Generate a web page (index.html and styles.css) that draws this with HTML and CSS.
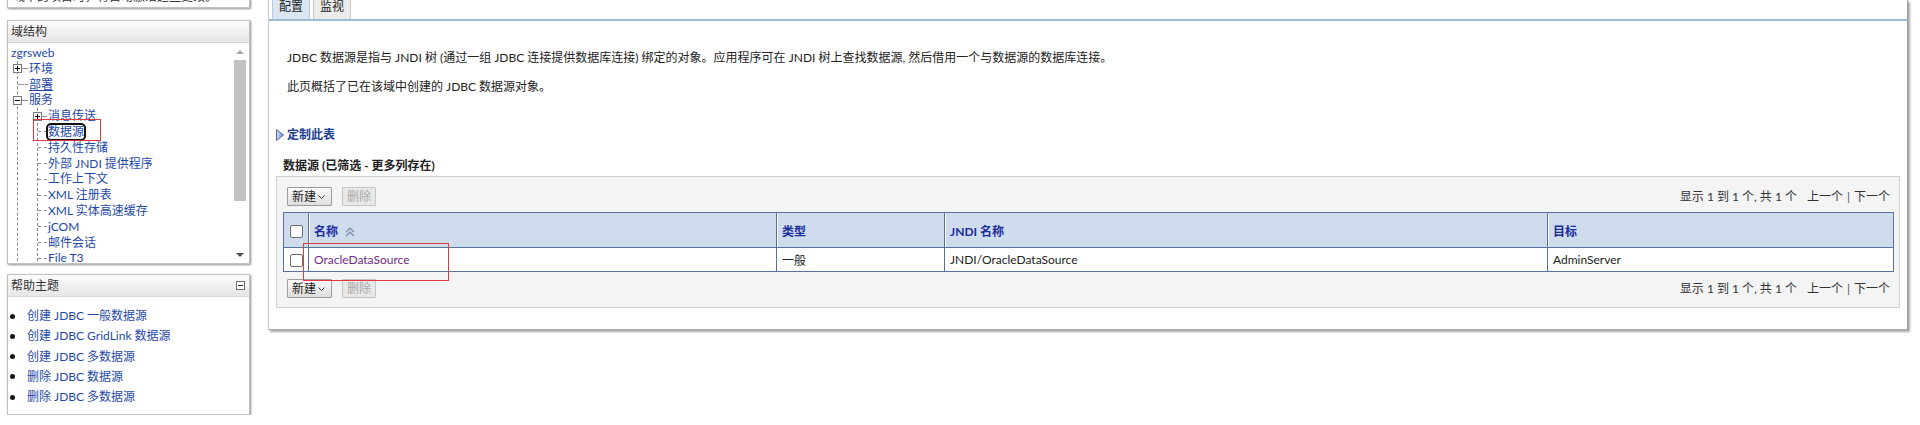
FILE: index.html
```html
<!DOCTYPE html>
<html lang="zh-CN">
<head>
<meta charset="utf-8">
<title>数据源概要</title>
<link rel="stylesheet" href="styles.css">
</head>
<body>
<div class="page">
  <aside class="side">
    <div class="panel change">
      <p class="change-text">域中的项目时，将自动激活这些更改。</p>
    </div>

    <div class="panel domain">
      <div class="phead">域结构</div>
      <div class="tree-wrap">
        <div class="tree">
          <div class="row root"><a class="lbl">zgrsweb</a></div>
          <ul class="l1">
            <li><div class="row"><svg class="tg" width="9" height="9" viewBox="0 0 9 9"><rect x="0.5" y="0.5" width="8" height="8" fill="#fff" stroke="#7a7a7a"/><path d="M2 4.5h5M4.5 2v5" stroke="#000" stroke-width="1"/></svg><span class="ln s1"></span><a class="lbl">环境</a></div></li>
            <li><div class="row"><span class="ln n1"></span><a class="lbl u">部署</a></div></li>
            <li><div class="row"><svg class="tg" width="9" height="9" viewBox="0 0 9 9"><rect x="0.5" y="0.5" width="8" height="8" fill="#fff" stroke="#7a7a7a"/><path d="M2 4.5h5" stroke="#000" stroke-width="1"/></svg><span class="ln s1"></span><a class="lbl">服务</a></div>
              <ul class="l2">
                <li><div class="row"><svg class="tg" width="9" height="9" viewBox="0 0 9 9"><rect x="0.5" y="0.5" width="8" height="8" fill="#fff" stroke="#7a7a7a"/><path d="M2 4.5h5M4.5 2v5" stroke="#000" stroke-width="1"/></svg><span class="ln s2"></span><a class="lbl">消息传送</a></div></li>
                <li><div class="row"><span class="ln n2"></span><a class="lbl focus">数据源</a></div></li>
                <li><div class="row"><span class="ln n2"></span><a class="lbl">持久性存储</a></div></li>
                <li><div class="row"><span class="ln n2"></span><a class="lbl">外部 JNDI 提供程序</a></div></li>
                <li><div class="row"><span class="ln n2"></span><a class="lbl">工作上下文</a></div></li>
                <li><div class="row"><span class="ln n2"></span><a class="lbl">XML 注册表</a></div></li>
                <li><div class="row"><span class="ln n2"></span><a class="lbl">XML 实体高速缓存</a></div></li>
                <li><div class="row"><span class="ln n2"></span><a class="lbl">jCOM</a></div></li>
                <li><div class="row"><span class="ln n2"></span><a class="lbl">邮件会话</a></div></li>
                <li><div class="row"><span class="ln n2"></span><a class="lbl">File T3</a></div></li>
              </ul>
            </li>
          </ul>
        </div>
        <div class="sbar">
          <span class="sb-btn"><span class="tri-up"></span></span>
          <span class="sb-thumb"></span>
          <span class="sb-fill"></span>
          <span class="sb-btn"><span class="tri-down"></span></span>
        </div>
        <div class="mark mark-tree"></div>
      </div>
    </div>

    <div class="panel help">
      <div class="phead">
        <span>帮助主题</span>
        <svg class="collapse" width="9" height="9" viewBox="0 0 9 9"><rect x="0.5" y="0.5" width="8" height="8" fill="#fff" stroke="#6f6f6f"/><path d="M2 4.5h5" stroke="#333" stroke-width="1"/></svg>
      </div>
      <ul class="help-list">
        <li><span class="dot"></span><a>创建 JDBC 一般数据源</a></li>
        <li><span class="dot"></span><a>创建 JDBC GridLink 数据源</a></li>
        <li><span class="dot"></span><a>创建 JDBC 多数据源</a></li>
        <li><span class="dot"></span><a>删除 JDBC 数据源</a></li>
        <li><span class="dot"></span><a>删除 JDBC 多数据源</a></li>
      </ul>
    </div>
  </aside>

  <main class="main">
    <div class="tabs">
      <span class="tab active">配置</span>
      <span class="tab">监视</span>
    </div>
    <div class="content">
      <p class="intro">JDBC 数据源是指与 JNDI 树 (通过一组 JDBC 连接提供数据库连接) 绑定的对象。应用程序可在 JNDI 树上查找数据源, 然后借用一个与数据源的数据库连接。</p>
      <p class="intro second">此页概括了已在该域中创建的 JDBC 数据源对象。</p>
      <div class="customize">
        <svg width="8" height="12" viewBox="0 0 8 12">
          <defs><linearGradient id="tg" x1="0" y1="0" x2="1" y2="0"><stop offset="0" stop-color="#d6e3f6"/><stop offset="1" stop-color="#5f84c6"/></linearGradient></defs>
          <polygon points="0.5,0.5 7.5,6 0.5,11.5" fill="url(#tg)" stroke="#50699a" stroke-width="1"/>
        </svg>
        <a>定制此表</a>
      </div>
      <h2 class="ttitle">数据源 (已筛选 - 更多列存在)</h2>
      <div class="tbox">
        <div class="toolbar">
          <div class="btns">
            <button class="btn new">新建<svg width="7" height="4" viewBox="0 0 7 4"><path d="M0.5 0.5L3.5 3.5L6.5 0.5" fill="none" stroke="#333" stroke-width="1"/></svg></button>
            <button class="btn dis">删除</button>
          </div>
          <div class="pager">显示 1 到 1 个, 共 1 个<span class="prev">上一个</span><span class="sep">|</span><span>下一个</span></div>
        </div>
        <table class="grid">
          <colgroup>
            <col class="c-cb"><col class="c-name"><col class="c-type"><col class="c-jndi"><col class="c-target">
          </colgroup>
          <thead>
            <tr>
              <th class="cb"><span class="chk"></span></th>
              <th>名称 <svg class="sort" width="10" height="10" viewBox="0 0 10 10"><path d="M1 5L5 1.2L9 5M1 9L5 5.2L9 9" fill="none" stroke="#7f90b0" stroke-width="1.4"/></svg></th>
              <th>类型</th>
              <th>JNDI 名称</th>
              <th>目标</th>
            </tr>
          </thead>
          <tbody>
            <tr>
              <td class="cb"><span class="chk"></span></td>
              <td><a class="visited">OracleDataSource</a></td>
              <td>一般</td>
              <td>JNDI/OracleDataSource</td>
              <td>AdminServer</td>
            </tr>
          </tbody>
        </table>
        <div class="toolbar bottom">
          <div class="btns">
            <button class="btn new">新建<svg width="7" height="4" viewBox="0 0 7 4"><path d="M0.5 0.5L3.5 3.5L6.5 0.5" fill="none" stroke="#333" stroke-width="1"/></svg></button>
            <button class="btn dis">删除</button>
          </div>
          <div class="pager">显示 1 到 1 个, 共 1 个<span class="prev">上一个</span><span class="sep">|</span><span>下一个</span></div>
        </div>
        <div class="mark mark-row"></div>
      </div>
    </div>
  </main>
</div>
</body>
</html>
```

FILE: styles.css
```css
* { box-sizing: border-box; }

html, body {
  margin: 0;
  padding: 0;
  background: #fff;
}

body {
  font-family: Lato, "Noto Sans CJK SC", sans-serif;
  font-size: 12px;
  color: #333;
  overflow: hidden;
}

a { text-decoration: none; cursor: pointer; }

.page {
  display: flex;
  align-items: flex-start;
}

/* ---------- left column ---------- */
.side {
  width: 243px;
  margin-left: 7px;
  flex: none;
}

.panel {
  background: #fff;
  border: 1px solid #c2c2c2;
  box-shadow: 1px 1px 2px rgba(0, 0, 0, 0.45);
}

.change {
  margin-top: -12px;
  padding: 0 0 2px 5px;
}

.change-text {
  margin: 0;
  line-height: 16px;
  color: #333;
  white-space: nowrap;
}

.domain { margin-top: 12px; }
.help { margin-top: 10px; }

.phead {
  height: 22px;
  line-height: 21px;
  padding: 0 4px 0 3px;
  background: linear-gradient(#fbfbfb, #e6e6e6);
  border-bottom: 1px solid #d6d6d6;
  color: #333;
  display: flex;
  justify-content: space-between;
  align-items: center;
}

.tree-wrap {
  position: relative;
  height: 220px;
  display: flex;
}

.tree {
  flex: 1;
  overflow: hidden;
  padding: 2px 0 0 3px;
  white-space: nowrap;
}

.tree ul {
  list-style: none;
  margin: 0;
  padding: 0;
}

.tree .l1 {
  margin-left: 6px;
  border-left: 1px dashed #8e8e8e;
}

.tree .l2 {
  margin-left: 19px;
  border-left: 1px dashed #8e8e8e;
}

.row {
  height: 15.8px;
  display: flex;
  align-items: center;
  line-height: 15.8px;
}

.tg {
  flex: none;
  margin-left: -5px;
  display: block;
}

.ln {
  flex: none;
  height: 0;
  border-top: 1px dashed #8e8e8e;
  margin-right: 1px;
}
.ln.s1 { width: 6px; }
.ln.n1 { width: 10px; }
.ln.s2 { width: 5px; }
.ln.n2 { width: 9px; }

.lbl { color: #1d48aa; }
.lbl.u { text-decoration: underline; }
.lbl.focus {
  border-radius: 3px;
  box-shadow: 0 0 0 2px #111;
  line-height: 14px;
}

.sbar {
  width: 14px;
  margin-right: 2px;
  display: flex;
  flex-direction: column;
  align-items: center;
}

.sb-btn {
  height: 17px;
  width: 14px;
  display: flex;
  align-items: center;
  justify-content: center;
}

.tri-up {
  width: 0; height: 0;
  border-left: 4px solid transparent;
  border-right: 4px solid transparent;
  border-bottom: 4px solid #a8a8a8;
}

.tri-down {
  width: 0; height: 0;
  border-left: 4px solid transparent;
  border-right: 4px solid transparent;
  border-top: 4px solid #4f4f4f;
}

.sb-thumb {
  width: 12px;
  height: 141px;
  background: #c1c1c1;
}

.sb-fill { flex: 1; }

.mark {
  position: absolute;
  border: 1px solid #e2393e;
  pointer-events: none;
}

.mark-tree {
  left: 25px;
  top: 76px;
  width: 68px;
  height: 22px;
}

.help-list {
  list-style: none;
  margin: 0;
  padding: 9px 0 7px 0;
}

.help-list li {
  display: flex;
  align-items: center;
  height: 20.25px;
  line-height: 20.25px;
}

.dot {
  width: 5px;
  height: 5px;
  border-radius: 50%;
  background: #111;
  margin: 0 12px 0 2px;
  flex: none;
}

.help-list a { color: #1f4aa8; }

.collapse { display: block; }

/* ---------- main panel ---------- */
.main {
  margin-left: 18px;
  width: 1640px;
  flex: none;
  background: #fff;
  border: 1px solid #c8c8c8;
  border-top: none;
  border-right-color: #9c9c9c;
  border-bottom-color: #a8a8a8;
  box-shadow: 2px 2px 2px rgba(0, 0, 0, 0.35);
}

.tabs {
  display: flex;
  gap: 3px;
  padding-left: 3px;
  height: 21px;
  border-bottom: 2px solid #9fbcd7;
}

.tab {
  height: 19px;
  padding: 0 6px;
  line-height: 14px;
  background: #ececec;
  border-left: 1px solid #c9c9c9;
  border-right: 1px solid #c9c9c9;
  color: #222;
}

.tab.active {
  background: #dae6f2;
  border-color: #bccbdb;
}

.content {
  padding: 29px 0 21px 0;
}

.intro {
  margin: 0 0 0 18px;
  line-height: 16px;
  color: #222;
}

.intro.second { margin-top: 13px; }

.customize {
  margin: 32px 0 0 7px;
  height: 16px;
  display: flex;
  align-items: center;
}

.customize svg {
  display: block;
  margin-right: 3px;
}

.customize a {
  font-weight: bold;
  color: #1b3d90;
  line-height: 16px;
}

.ttitle {
  margin: 15px 0 0 14px;
  font-size: 12px;
  font-weight: bold;
  line-height: 16px;
  color: #222;
}

.tbox {
  position: relative;
  margin: 2px 7px 0 7px;
  background: #f4f4f4;
  border: 1px solid #cfcfcf;
  padding: 10px 6px 9px 6px;
}

.toolbar {
  height: 19px;
  padding: 0 3px 0 4px;
  display: flex;
  justify-content: space-between;
  align-items: center;
}

.toolbar.bottom { margin-top: 7px; }

.btns {
  display: flex;
  gap: 10px;
}

.btn {
  height: 19px;
  margin: 0;
  padding: 0 4px;
  font: inherit;
  line-height: 17px;
  color: #222;
  background: linear-gradient(#fbfbfb, #dedede);
  border: 1px solid #9a9a9a;
  border-radius: 1px;
  display: flex;
  align-items: center;
  gap: 2px;
}

.btn.new { padding-right: 6px; }
.btn svg { display: block; margin-top: 1px; }

.btn.dis {
  color: #a9a9a9;
  background: #e8e8e8;
  border-color: #c6c6c6;
}

.pager {
  color: #333;
  white-space: nowrap;
  line-height: 16px;
}

.pager .prev { margin-left: 10px; }
.pager .sep { margin: 0 4px; color: #555; }

.grid {
  width: 100%;
  margin-top: 6px;
  border-collapse: collapse;
  table-layout: fixed;
  background: #fff;
}

.c-cb { width: 25px; }
.c-name { width: 468px; }
.c-type { width: 168px; }
.c-jndi { width: 603px; }
.c-target { width: 346px; }

.grid th,
.grid td {
  border: 1px solid #57739b;
  padding: 0 0 0 5px;
  text-align: left;
  white-space: nowrap;
}

.grid th {
  height: 35px;
  background: #cfdcee;
  box-shadow: inset 1px 0 0 #fff;
  color: #1b2c9d;
  font-weight: bold;
}

.grid td {
  height: 24px;
  color: #222;
}

.grid .cb {
  padding: 0;
  text-align: center;
  box-shadow: none;
}

.chk {
  display: inline-block;
  width: 13px;
  height: 13px;
  border: 1px solid #6d6d6d;
  border-radius: 2px;
  background: #fff;
  vertical-align: middle;
}

.sort {
  vertical-align: -1px;
  margin-left: 4px;
}

.visited { color: #722a8a; }

.mark-row {
  left: 26px;
  top: 66px;
  width: 146px;
  height: 38px;
}
```
